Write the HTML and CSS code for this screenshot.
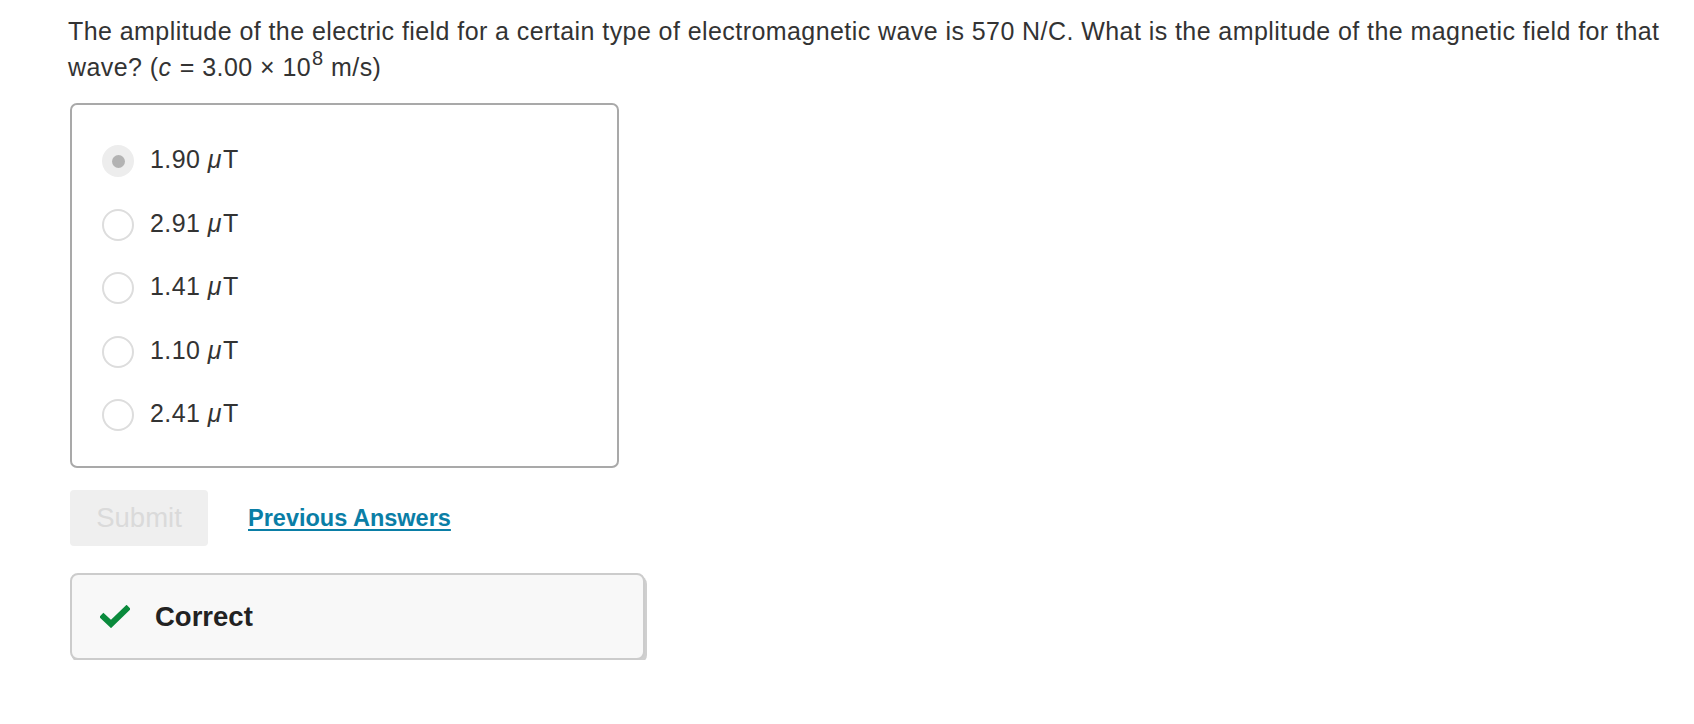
FILE: index.html
```html
<!DOCTYPE html>
<html lang="en">
<head>
<meta charset="utf-8">
<title>Question</title>
<link rel="stylesheet" href="styles.css">
</head>
<body>
<main class="page">
  <p class="question"><span class="q-part">The amplitude of the electric field for a certain type of electromagnetic wave is 570 N/C. What is the amplitude of the magnetic field for that</span> <span class="q-part">wave? (<i class="var">c</i> = 3.00 × 10<sup class="exp">8</sup> m/s)</span></p>

  <div class="options">
    <label class="option">
      <span class="radio radio-selected"><span class="dot"></span></span>
      <span class="opt-text">1.90 <i class="mu">μ</i>T</span>
    </label>
    <label class="option">
      <span class="radio"></span>
      <span class="opt-text">2.91 <i class="mu">μ</i>T</span>
    </label>
    <label class="option">
      <span class="radio"></span>
      <span class="opt-text">1.41 <i class="mu">μ</i>T</span>
    </label>
    <label class="option">
      <span class="radio"></span>
      <span class="opt-text">1.10 <i class="mu">μ</i>T</span>
    </label>
    <label class="option">
      <span class="radio"></span>
      <span class="opt-text">2.41 <i class="mu">μ</i>T</span>
    </label>
  </div>

  <div class="actions">
    <button class="submit" disabled>Submit</button>
    <a class="prev-link" href="#">Previous Answers</a>
  </div>

  <div class="feedback">
    <svg class="check" width="30" height="23" viewBox="0 0 30 23" aria-hidden="true">
      <path d="M3.5 12 L11 19 L26.5 4" fill="none" stroke="#0a8a3c" stroke-width="6" stroke-linecap="square" stroke-linejoin="miter"/>
    </svg>
    <span class="feedback-text">Correct</span>
  </div>
</main>
</body>
</html>
```

FILE: styles.css
```css
html, body {
  margin: 0;
  padding: 0;
  background: #ffffff;
}

body {
  font-family: "Liberation Sans", Arial, Helvetica, sans-serif;
  color: #333333;
}

.page {
  padding: 14px 0 0 70px;
}

.question {
  margin: 0 0 0 -2px;
  width: 1600px;
  font-size: 25px;
  letter-spacing: 0.43px;
  line-height: 35.5px;
  color: #333333;
}

.q-part {
  display: inline-block;
}

.question .var {
  margin-right: 1px;
}

.question .exp {
  font-size: 0.8em;
  line-height: 0;
  vertical-align: 0.55em;
  margin-left: 1px;
}

.options {
  box-sizing: border-box;
  margin-top: 18px;
  width: 549px;
  height: 365px;
  border: 2px solid #a9a9a9;
  border-radius: 7px;
  padding: 40px 0 0 30px;
  display: flex;
  flex-direction: column;
  gap: 31.5px;
}

.option {
  display: flex;
  align-items: center;
  height: 32px;
  gap: 16px;
}

.radio {
  box-sizing: border-box;
  width: 32px;
  height: 32px;
  border-radius: 50%;
  border: 2.5px solid #dddddd;
  background: #ffffff;
  display: flex;
  align-items: center;
  justify-content: center;
  flex: none;
}

.radio-selected {
  border: none;
  background: #ededed;
}

.dot {
  width: 13px;
  height: 13px;
  border-radius: 50%;
  background: #b3b3b3;
}

.opt-text {
  font-size: 25px;
  letter-spacing: 0.43px;
  line-height: 32px;
  color: #333333;
  position: relative;
  top: -2px;
}

.opt-text .mu {
  margin-right: 1px;
}

.actions {
  margin-top: 22px;
  display: flex;
  align-items: center;
  gap: 40px;
}

.submit {
  width: 138px;
  height: 56px;
  border: none;
  border-radius: 4px;
  background: #efefef;
  color: #dadada;
  font-family: "Liberation Sans", Arial, Helvetica, sans-serif;
  font-size: 27.5px;
  padding: 0;
}

.prev-link {
  font-size: 23.5px;
  font-weight: bold;
  color: #0a7ea6;
  text-decoration: underline;
  text-decoration-thickness: 2px;
  text-underline-offset: 3px;
}

.feedback {
  box-sizing: border-box;
  margin-top: 27px;
  width: 575px;
  height: 87px;
  border: 2px solid #cccccc;
  border-radius: 8px;
  background: #f8f8f8;
  box-shadow: 2px 3px 0 #cfcfcf;
  display: flex;
  align-items: center;
  padding-left: 28px;
  gap: 25px;
}

.check {
  flex: none;
}

.feedback-text {
  font-size: 27.5px;
  font-weight: bold;
  color: #222222;
}
```
